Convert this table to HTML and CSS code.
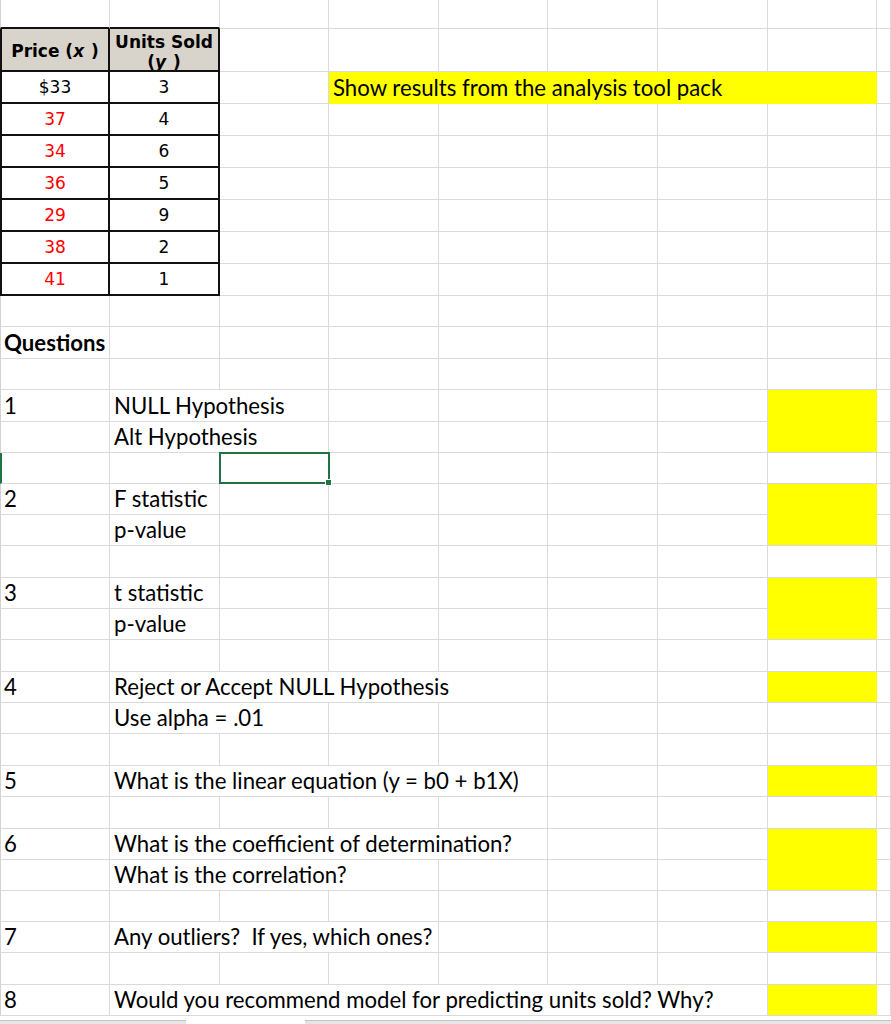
FILE: index.html
```html
<!DOCTYPE html>
<html>
<head>
<meta charset="utf-8">
<link rel="stylesheet" href="styles.css">
</head>
<body>
<div class="sheet">
  <div class="row h29">
    <div class="c tt"></div><div class="c tt"></div><div class="c"></div><div class="c"></div><div class="c"></div><div class="c"></div><div class="c"></div><div class="c"></div><div class="c"></div>
  </div>
  <div class="row h43 trow">
    <div class="c th th-price"><span>Price (<i>x</i> )</span></div><div class="c th th-units"><span>Units Sold (<i>y</i> )</span></div><div class="c"></div><div class="c"></div><div class="c"></div><div class="c"></div><div class="c"></div><div class="c"></div><div class="c"></div>
  </div>
  <div class="row h32 trow">
    <div class="c td">$33</div><div class="c td">3</div><div class="c"></div><div class="c q s5 y yb">Show results from the analysis tool pack</div><div class="c"></div>
  </div>
  <div class="row h32 trow">
    <div class="c td red">37</div><div class="c td">4</div><div class="c"></div><div class="c"></div><div class="c"></div><div class="c"></div><div class="c"></div><div class="c"></div><div class="c"></div>
  </div>
  <div class="row h32 trow">
    <div class="c td red">34</div><div class="c td">6</div><div class="c"></div><div class="c"></div><div class="c"></div><div class="c"></div><div class="c"></div><div class="c"></div><div class="c"></div>
  </div>
  <div class="row h32 trow">
    <div class="c td red">36</div><div class="c td">5</div><div class="c"></div><div class="c"></div><div class="c"></div><div class="c"></div><div class="c"></div><div class="c"></div><div class="c"></div>
  </div>
  <div class="row h32 trow">
    <div class="c td red">29</div><div class="c td">9</div><div class="c"></div><div class="c"></div><div class="c"></div><div class="c"></div><div class="c"></div><div class="c"></div><div class="c"></div>
  </div>
  <div class="row h32 trow">
    <div class="c td red">38</div><div class="c td">2</div><div class="c"></div><div class="c"></div><div class="c"></div><div class="c"></div><div class="c"></div><div class="c"></div><div class="c"></div>
  </div>
  <div class="row h32 trow">
    <div class="c td red">41</div><div class="c td">1</div><div class="c"></div><div class="c"></div><div class="c"></div><div class="c"></div><div class="c"></div><div class="c"></div><div class="c"></div>
  </div>

  <div class="row h31">
    <div class="c"></div><div class="c"></div><div class="c"></div><div class="c"></div><div class="c"></div><div class="c"></div><div class="c"></div><div class="c"></div><div class="c"></div>
  </div>
  <div class="row h32">
    <div class="c qa bold">Questions</div><div class="c"></div><div class="c"></div><div class="c"></div><div class="c"></div><div class="c"></div><div class="c"></div><div class="c"></div><div class="c"></div>
  </div>
  <div class="row h31">
    <div class="c"></div><div class="c"></div><div class="c"></div><div class="c"></div><div class="c"></div><div class="c"></div><div class="c"></div><div class="c"></div><div class="c"></div>
  </div>
  <div class="row h32">
    <div class="c qa">1</div><div class="c q s2">NULL Hypothesis</div><div class="c"></div><div class="c"></div><div class="c"></div><div class="c"></div><div class="c y yb"></div><div class="c"></div>
  </div>
  <div class="row h31">
    <div class="c"></div><div class="c q s2">Alt Hypothesis</div><div class="c"></div><div class="c"></div><div class="c"></div><div class="c"></div><div class="c y"></div><div class="c"></div>
  </div>
  <div class="row h31 active">
    <div class="c"></div><div class="c"></div><div class="c sel"></div><div class="c"></div><div class="c"></div><div class="c"></div><div class="c"></div><div class="c"></div><div class="c"></div>
  </div>
  <div class="row h31">
    <div class="c qa">2</div><div class="c q">F statistic</div><div class="c"></div><div class="c"></div><div class="c"></div><div class="c"></div><div class="c"></div><div class="c y yb"></div><div class="c"></div>
  </div>
  <div class="row h31">
    <div class="c"></div><div class="c q">p-value</div><div class="c"></div><div class="c"></div><div class="c"></div><div class="c"></div><div class="c"></div><div class="c y"></div><div class="c"></div>
  </div>
  <div class="row h32">
    <div class="c"></div><div class="c"></div><div class="c"></div><div class="c"></div><div class="c"></div><div class="c"></div><div class="c"></div><div class="c"></div><div class="c"></div>
  </div>
  <div class="row h31">
    <div class="c qa">3</div><div class="c q">t statistic</div><div class="c"></div><div class="c"></div><div class="c"></div><div class="c"></div><div class="c"></div><div class="c y yb"></div><div class="c"></div>
  </div>
  <div class="row h31">
    <div class="c"></div><div class="c q">p-value</div><div class="c"></div><div class="c"></div><div class="c"></div><div class="c"></div><div class="c"></div><div class="c y"></div><div class="c"></div>
  </div>
  <div class="row h32">
    <div class="c"></div><div class="c"></div><div class="c"></div><div class="c"></div><div class="c"></div><div class="c"></div><div class="c"></div><div class="c"></div><div class="c"></div>
  </div>
  <div class="row h31">
    <div class="c qa">4</div><div class="c q s4">Reject or Accept NULL Hypothesis</div><div class="c"></div><div class="c"></div><div class="c y"></div><div class="c"></div>
  </div>
  <div class="row h31">
    <div class="c"></div><div class="c q s2">Use alpha = .01</div><div class="c"></div><div class="c"></div><div class="c"></div><div class="c"></div><div class="c"></div><div class="c"></div>
  </div>
  <div class="row h32">
    <div class="c"></div><div class="c"></div><div class="c"></div><div class="c"></div><div class="c"></div><div class="c"></div><div class="c"></div><div class="c"></div><div class="c"></div>
  </div>
  <div class="row h31">
    <div class="c qa">5</div><div class="c q s4">What is the linear equation (y = b0 + b1X)</div><div class="c"></div><div class="c"></div><div class="c y"></div><div class="c"></div>
  </div>
  <div class="row h32">
    <div class="c"></div><div class="c"></div><div class="c"></div><div class="c"></div><div class="c"></div><div class="c"></div><div class="c"></div><div class="c"></div><div class="c"></div>
  </div>
  <div class="row h31">
    <div class="c qa">6</div><div class="c q s4">What is the coefficient of determination?</div><div class="c"></div><div class="c"></div><div class="c y yb"></div><div class="c"></div>
  </div>
  <div class="row h31">
    <div class="c"></div><div class="c q s3">What is the correlation?</div><div class="c"></div><div class="c"></div><div class="c"></div><div class="c y"></div><div class="c"></div>
  </div>
  <div class="row h31">
    <div class="c"></div><div class="c"></div><div class="c"></div><div class="c"></div><div class="c"></div><div class="c"></div><div class="c"></div><div class="c"></div><div class="c"></div>
  </div>
  <div class="row h31">
    <div class="c qa">7</div><div class="c q s3">Any outliers?  If yes, which ones?</div><div class="c"></div><div class="c"></div><div class="c"></div><div class="c y"></div><div class="c"></div>
  </div>
  <div class="row h32">
    <div class="c"></div><div class="c"></div><div class="c"></div><div class="c"></div><div class="c"></div><div class="c"></div><div class="c"></div><div class="c"></div><div class="c"></div>
  </div>
  <div class="row h31">
    <div class="c qa">8</div><div class="c q s6">Would you recommend model for predicting units sold? Why?</div><div class="c y"></div><div class="c"></div>
  </div>
  <div class="footer">
    <div class="bar bar1"></div><div class="gap"></div><div class="bar bar2"></div>
  </div>
</div>
</body>
</html>
```
FILE: styles.css
```css
html, body {
  margin: 0;
  padding: 0;
  background: #ffffff;
}
.sheet {
  width: 891px;
  height: 1024px;
  overflow: hidden;
  font-family: Lato, "Liberation Sans", sans-serif;
  color: #000;
}
.row {
  display: grid;
  grid-template-columns: 110px 110px 109px 110px 109px 110px 110px 109px 14px;
  grid-template-rows: 100%;
}
.h29 { height: 29px; }
.h31 { height: 31px; }
.h32 { height: 32px; }
.h43 { height: 43px; }

.c {
  box-sizing: border-box;
  min-width: 0;
  border-right: 1px solid #dadada;
  border-bottom: 1px solid #dadada;
  white-space: pre;
  display: flex;
  align-items: flex-end;
}
.row > .c:first-child {
  border-left: 1px solid #d2d2d2;
}
.s2 { grid-column: span 2; }
.s3 { grid-column: span 3; }
.s4 { grid-column: span 4; }
.s5 { grid-column: span 5; }
.s6 { grid-column: span 6; }

/* question text */
.q, .qa {
  font-size: 22.2px;
  line-height: 22px;
  padding: 0 0 4px 4px;
}
.qa { padding-left: 3px; }
.bold { font-weight: bold; }

.y {
  background: #ffff00;
  border-right-color: #ffff00;
}
.yb { border-bottom-color: #ffff00; }

/* data table */
.tt { border-bottom: 2px solid #111; }
.trow > .c:nth-child(-n+2) {
  border-right: 2px solid #111;
  border-bottom: 2px solid #111;
}
.trow > .c:first-child { border-left: 2px solid #111; }
.th {
  background: #d8d4cb;
  font-family: "DejaVu Sans", Verdana, sans-serif;
  font-weight: bold;
  font-size: 17px;
  line-height: 20px;
  white-space: normal;
  text-align: center;
  justify-content: center;
  align-items: flex-start;
  overflow: hidden;
}
.th > span { display: block; }
.th i { padding-right: 1px; }
.th-price { padding-top: 12px; }
.th-units { padding-top: 3px; }
.td {
  font-family: "DejaVu Sans", Verdana, sans-serif;
  font-size: 17px;
  line-height: 20px;
  justify-content: center;
  align-items: center;
}
.red { color: #ff0000; }

/* selection */
.active > .c:first-child { border-left: 2px solid #217346; }
.sel { position: relative; }
.sel::before {
  content: "";
  position: absolute;
  left: -1px;
  top: -1px;
  right: -2px;
  bottom: -1px;
  border: 2px solid #217346;
  z-index: 1;
}
.sel::after {
  content: "";
  position: absolute;
  width: 5px;
  height: 5px;
  right: -4px;
  bottom: -3px;
  background: #217346;
  border: 1px solid #fff;
  z-index: 2;
}

.footer {
  height: 8px;
  display: flex;
  align-items: flex-end;
}
.bar {
  box-sizing: border-box;
  height: 4px;
  background: #e6e6e6;
  border-top: 1px solid #c4c4c4;
}
.bar1 { width: 186px; }
.gap { width: 119px; }
.bar2 { flex: 1; }
```
